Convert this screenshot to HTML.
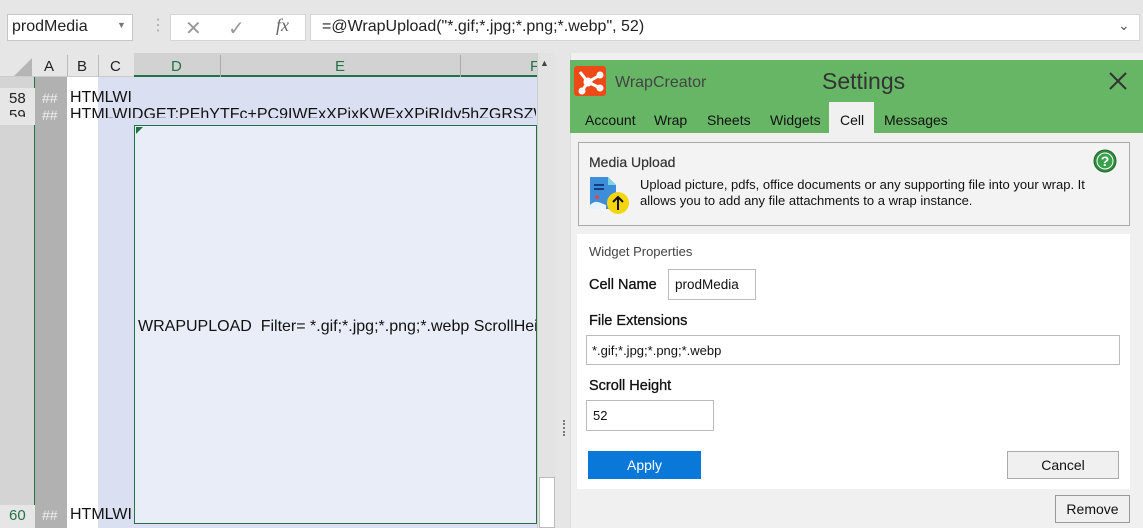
<!DOCTYPE html>
<html><head><style>
*{margin:0;padding:0;box-sizing:border-box}
body{width:1143px;height:528px;overflow:hidden;background:#e6e6e6;font-family:"Liberation Sans",sans-serif;position:relative}
.a{position:absolute}
.lb{font-size:14.5px;color:#111;-webkit-text-stroke:0.3px #111}
</style></head><body>
<div class="a" style="left:0;top:0;width:1143px;height:50px;background:#e6e6e6"></div>
<div class="a" style="left:7px;top:14px;width:126px;height:27px;background:#fff;border:1px solid #c6c6c6"></div>
<div class="a" style="left:12px;top:18px;font-size:16px;color:#222">prodMedia</div>
<div class="a" style="left:117px;top:20px;font-size:9px;color:#777">▼</div>
<div class="a" style="left:150px;top:15px;font-size:16px;color:#aaa">⋮</div>
<div class="a" style="left:170px;top:14px;width:136px;height:27px;background:#fff;border:1px solid #d6d6d6"></div>
<div class="a" style="left:185px;top:16px;font-size:20px;color:#999">✕</div>
<div class="a" style="left:228px;top:16px;font-size:20px;color:#999">✓</div>
<div class="a" style="left:276px;top:15px;font-size:18px;color:#666;font-family:'Liberation Serif',serif;font-style:italic">fx</div>
<div class="a" style="left:310px;top:14px;width:830px;height:27px;background:#fff;border:1px solid #d6d6d6"></div>
<div class="a" style="left:322px;top:18px;font-size:16px;color:#222">=@WrapUpload("*.gif;*.jpg;*.png;*.webp", 52)</div>
<div class="a" style="left:1118px;top:17px;font-size:14px;color:#555">⌄</div>
<div class="a" style="left:0;top:53px;width:555px;height:475px;background:#fff"></div>
<div class="a" style="left:0;top:53px;width:537px;height:24px;background:#e6e6e6;border-bottom:1px solid #ccc"></div>
<div class="a" style="left:134px;top:53px;width:403px;height:24px;background:#d2d2d2;border-bottom:2px solid #217346"></div>
<svg class="a" style="left:12px;top:58px" width="20" height="18"><polygon points="20,0 20,18 2,18" fill="#b5b5b5"/></svg>
<div class="a" style="left:44px;top:58px;font-size:15px;color:#222">A</div>
<div class="a" style="left:77px;top:58px;font-size:15px;color:#222">B</div>
<div class="a" style="left:110px;top:58px;font-size:15px;color:#222">C</div>
<div class="a" style="left:171px;top:58px;font-size:15px;color:#217346">D</div>
<div class="a" style="left:335px;top:58px;font-size:15px;color:#217346">E</div>
<div class="a" style="left:530px;top:58px;font-size:15px;color:#217346">F</div>
<div class="a" style="left:67px;top:55px;width:1px;height:22px;background:#bbb"></div>
<div class="a" style="left:98px;top:55px;width:1px;height:22px;background:#bbb"></div>
<div class="a" style="left:220px;top:55px;width:1px;height:22px;background:#aaa"></div>
<div class="a" style="left:460px;top:55px;width:1px;height:22px;background:#aaa"></div>
<div class="a" style="left:0;top:77px;width:35px;height:451px;background:#d4d4d4;border-right:1px solid #217346"></div>
<div class="a" style="left:0;top:88px;width:35px;height:37px;background:#e6e6e6"></div>
<div class="a" style="left:0;top:505px;width:35px;height:23px;background:#e6e6e6"></div>
<div class="a" style="left:35px;top:77px;width:32px;height:451px;background:#b1b1b1"></div>
<div class="a" style="left:98px;top:77px;width:439px;height:451px;background:#dae0f1"></div>
<div class="a" style="left:134px;top:125px;width:403px;height:399px;background:#e9edf7;border:1px solid #217346"></div>
<svg class="a" style="left:136px;top:127px" width="7" height="7"><polygon points="0,0 7,0 0,7" fill="#217346"/></svg>
<div class="a" style="left:9px;top:90px;font-size:15px;color:#222">58</div>
<div class="a" style="left:9px;top:107px;font-size:15px;color:#222;height:10px;overflow:hidden">59</div>
<div class="a" style="left:9px;top:507px;font-size:15px;color:#217346">60</div>
<div class="a" style="left:42px;top:90px;font-size:14px;color:#eee">##</div>
<div class="a" style="left:42px;top:107px;font-size:14px;color:#eee">##</div>
<div class="a" style="left:42px;top:507px;font-size:14px;color:#eee">##</div>
<div class="a" style="left:70px;top:89px;font-size:16px;color:#111">HTMLWI</div>
<div class="a" style="left:70px;top:106px;font-size:16px;color:#111;height:12px;overflow:hidden;width:466px;white-space:nowrap">HTMLWIDGET:PEhYTFc+PC9IWExXPjxKWExXPiRIdy5hZGRSZWNj</div>
<div class="a" style="left:70px;top:506px;font-size:16px;color:#111">HTMLWI</div>
<div class="a" style="left:138px;top:318px;font-size:16px;color:#111;width:398px;white-space:nowrap;overflow:hidden">WRAPUPLOAD&nbsp; Filter= *.gif;*.jpg;*.png;*.webp ScrollHeight</div>
<div class="a" style="left:537px;top:53px;width:18px;height:475px;background:#e3e3e3;border-left:1px solid #ccc"></div>
<div class="a" style="left:540px;top:58px;font-size:9px;color:#444">▲</div>
<div class="a" style="left:539px;top:477px;width:16px;height:51px;background:#fff;border:1px solid #bbb"></div>
<div class="a" style="left:563px;top:420px;width:3px;height:16px;border-left:2px dotted #777"></div>
<div class="a" style="left:570px;top:53px;width:573px;height:475px;background:#f0f0f0;border-left:1px solid #ddd"></div>
<div class="a" style="left:570px;top:60px;width:573px;height:73px;background:#66b666"></div>
<div class="a" style="left:574px;top:66px;width:32px;height:30px;background:#ee4a18;border-radius:3px"></div>
<svg class="a" style="left:574px;top:66px" width="32" height="30"><g stroke="#fff" stroke-width="3" fill="#fff"><line x1="14" y1="16" x2="6" y2="6"/><line x1="14" y1="16" x2="26" y2="9"/><line x1="14" y1="16" x2="8" y2="25"/><line x1="14" y1="16" x2="26" y2="22"/><circle cx="14" cy="16" r="3"/><circle cx="26" cy="9" r="2"/><circle cx="8" cy="25" r="2"/><circle cx="26" cy="22" r="2"/></g></svg>
<div class="a" style="left:615px;top:74px;font-size:16px;color:#444">WrapCreator</div>
<div class="a" style="left:822px;top:68px;font-size:23px;color:#333">Settings</div>
<svg class="a" style="left:1109px;top:72px" width="18" height="18"><path d="M1 1L17 17M17 1L1 17" stroke="#333" stroke-width="2"/></svg>
<div class="a" style="left:829px;top:102px;width:45px;height:31px;background:#f0f0f0"></div>
<div class="a" style="left:585px;top:112px;font-size:14px;color:#111">Account</div>
<div class="a" style="left:654px;top:112px;font-size:14px;color:#111">Wrap</div>
<div class="a" style="left:707px;top:112px;font-size:14px;color:#111">Sheets</div>
<div class="a" style="left:770px;top:112px;font-size:14px;color:#111">Widgets</div>
<div class="a" style="left:840px;top:112px;font-size:14px;color:#111">Cell</div>
<div class="a" style="left:884px;top:112px;font-size:14px;color:#111">Messages</div>
<div class="a" style="left:578px;top:142px;width:552px;height:84px;background:#f3f3f3;border:1px solid #aaa"></div>
<div class="a" style="left:589px;top:154px;font-size:14px;color:#333;-webkit-text-stroke:0.2px #333">Media Upload</div>
<svg class="a" style="left:1093px;top:149px" width="24" height="24"><circle cx="12" cy="12" r="11" fill="#2e8b3e" stroke="#1f6b2c"/><circle cx="12" cy="12" r="8" fill="#3aa14b" stroke="#fff" stroke-width="1"/><text x="12" y="17" font-size="14" font-weight="bold" fill="#fff" text-anchor="middle" font-family="Liberation Sans">?</text></svg>
<svg class="a" style="left:587px;top:175px" width="44" height="40"><path d="M3 2h18l8 8v24H3z" fill="#3d8ed8"/><path d="M21 2l8 8h-8z" fill="#7fd4e0"/><rect x="7" y="9" width="10" height="2" fill="#163e78"/><rect x="7" y="13" width="10" height="2" fill="#163e78"/><circle cx="10" cy="22" r="2" fill="#e44"/><path d="M3 30c6-6 10-2 16 0v4H3z" fill="#e6f2ff"/><circle cx="31" cy="28" r="11" fill="#f5d60c"/><path d="M31 35V22M26 27l5-5 5 5" stroke="#111" stroke-width="2" fill="none"/></svg>
<div class="a" style="left:640px;top:177px;font-size:13px;color:#111;line-height:15.5px;width:480px">Upload picture, pdfs, office documents or any supporting file into your wrap. It allows you to add any file attachments to a wrap instance.</div>
<div class="a" style="left:577px;top:234px;width:553px;height:255px;background:#fff"></div>
<div class="a" style="left:589px;top:244px;font-size:13px;color:#444">Widget Properties</div>
<div class="a lb" style="left:589px;top:277px">Cell Name</div>
<div class="a" style="left:668px;top:269px;width:88px;height:31px;border:1px solid #bbb;background:#fff"></div>
<div class="a" style="left:675px;top:277px;font-size:13.5px;color:#111">prodMedia</div>
<div class="a lb" style="left:589px;top:313px">File Extensions</div>
<div class="a" style="left:586px;top:335px;width:534px;height:30px;border:1px solid #bbb;background:#fff"></div>
<div class="a" style="left:592px;top:343px;font-size:13px;color:#111">*.gif;*.jpg;*.png;*.webp</div>
<div class="a lb" style="left:589px;top:378px">Scroll Height</div>
<div class="a" style="left:586px;top:400px;width:128px;height:31px;border:1px solid #bbb;background:#fff"></div>
<div class="a" style="left:593px;top:408px;font-size:13px;color:#111">52</div>
<div class="a" style="left:588px;top:451px;width:113px;height:28px;background:#0a78d8;color:#fff;font-size:14px;text-align:center;line-height:28px">Apply</div>
<div class="a" style="left:1007px;top:451px;width:112px;height:28px;background:#f0f0f0;border:1px solid #aaa;font-size:14px;text-align:center;line-height:26px;color:#111">Cancel</div>
<div class="a" style="left:1055px;top:495px;width:75px;height:28px;background:#f0f0f0;border:1px solid #999;font-size:14px;text-align:center;line-height:26px;color:#111">Remove</div>
</body></html>
